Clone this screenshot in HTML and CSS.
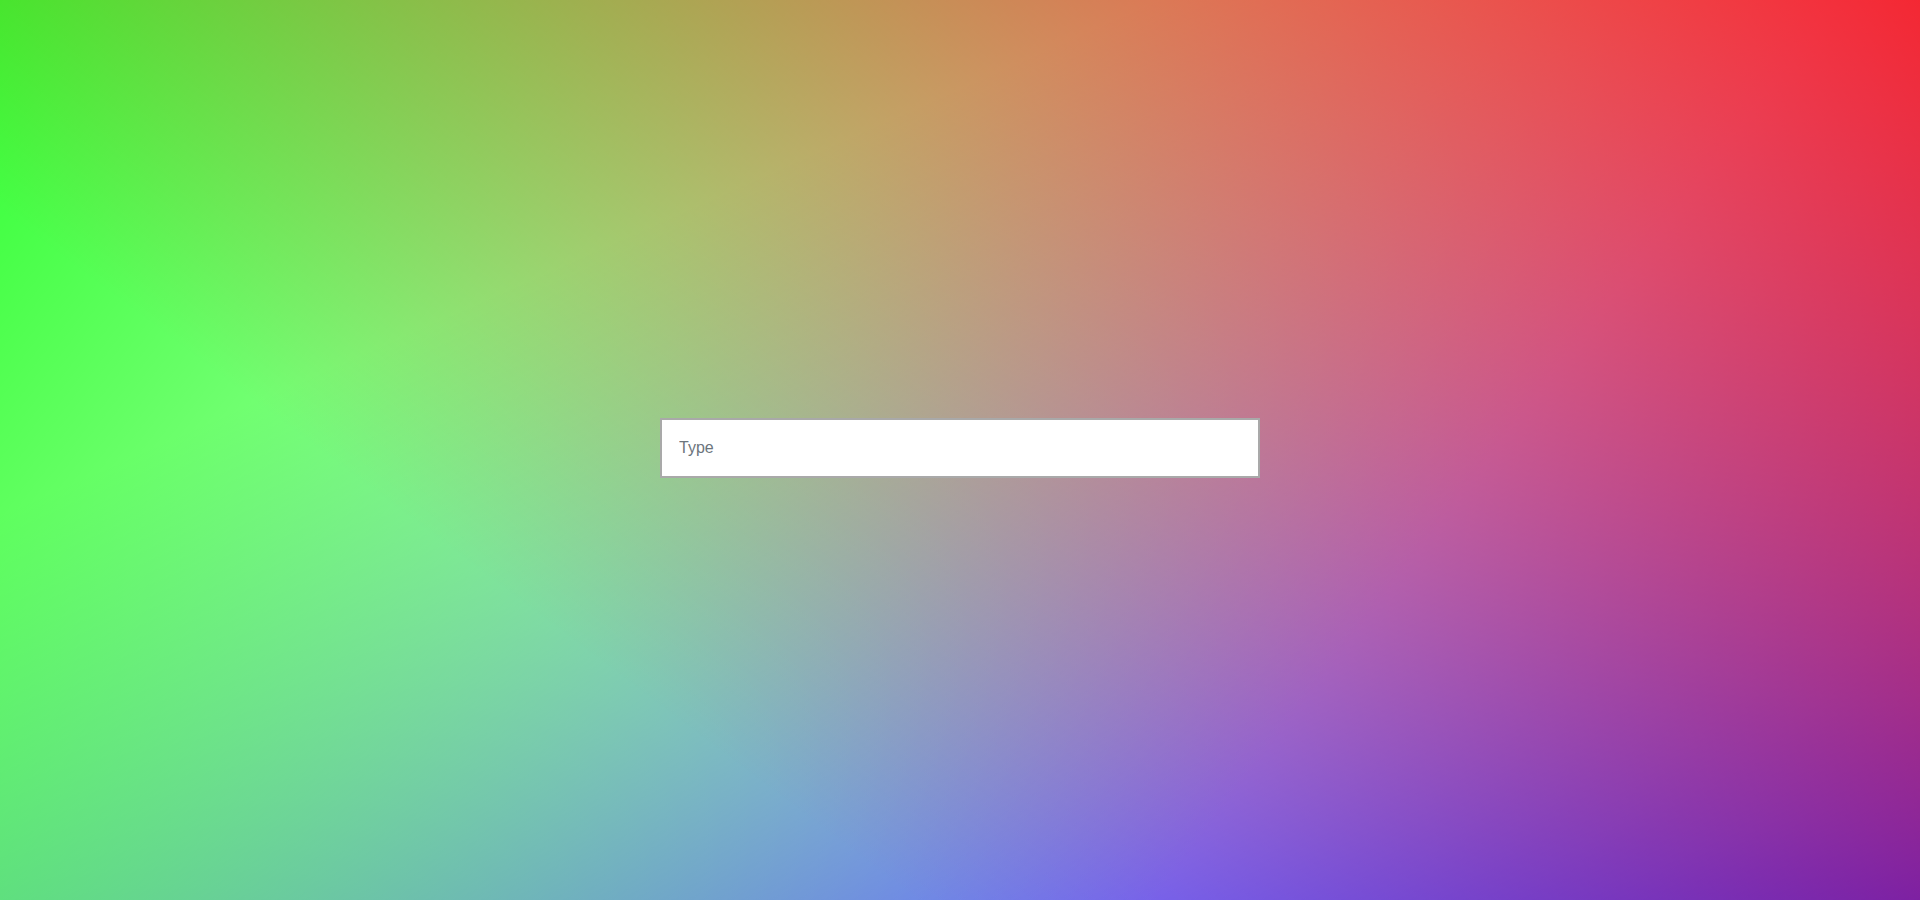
FILE: index.html
```html
<!DOCTYPE html>
<html lang="en">
<head>
<meta charset="utf-8">
<title>Type</title>
<link rel="stylesheet" href="styles.css">
</head>
<body>
<main class="stage">
  <input class="type-input" type="text" placeholder="Type">
</main>
</body>
</html>
```
FILE: styles.css
```css
html, body {
  margin: 0;
  padding: 0;
  height: 100%;
}
body {
  background: #fff;
  font-family: "Liberation Sans", Arial, sans-serif;
}
.stage {
  height: 100%;
  display: flex;
  align-items: center;
  justify-content: center;
  background:
    linear-gradient(217deg, rgba(255,0,0,.8), rgba(255,0,0,0) 70.71%),
    linear-gradient(127deg, rgba(0,255,0,.8), rgba(0,255,0,0) 70.71%),
    linear-gradient(336deg, rgba(0,0,255,.8), rgba(0,0,255,0) 70.71%);
}
.type-input {
  box-sizing: border-box;
  width: 600px;
  height: 60px;
  margin-top: -4px;
  padding: 0 17px;
  border: 2px solid #a9a9a9;
  background: #fff;
  font-family: "Liberation Sans", Arial, sans-serif;
  font-size: 16px;
  color: #333;
  outline: none;
}
.type-input::placeholder {
  color: #6c757d;
}
```
